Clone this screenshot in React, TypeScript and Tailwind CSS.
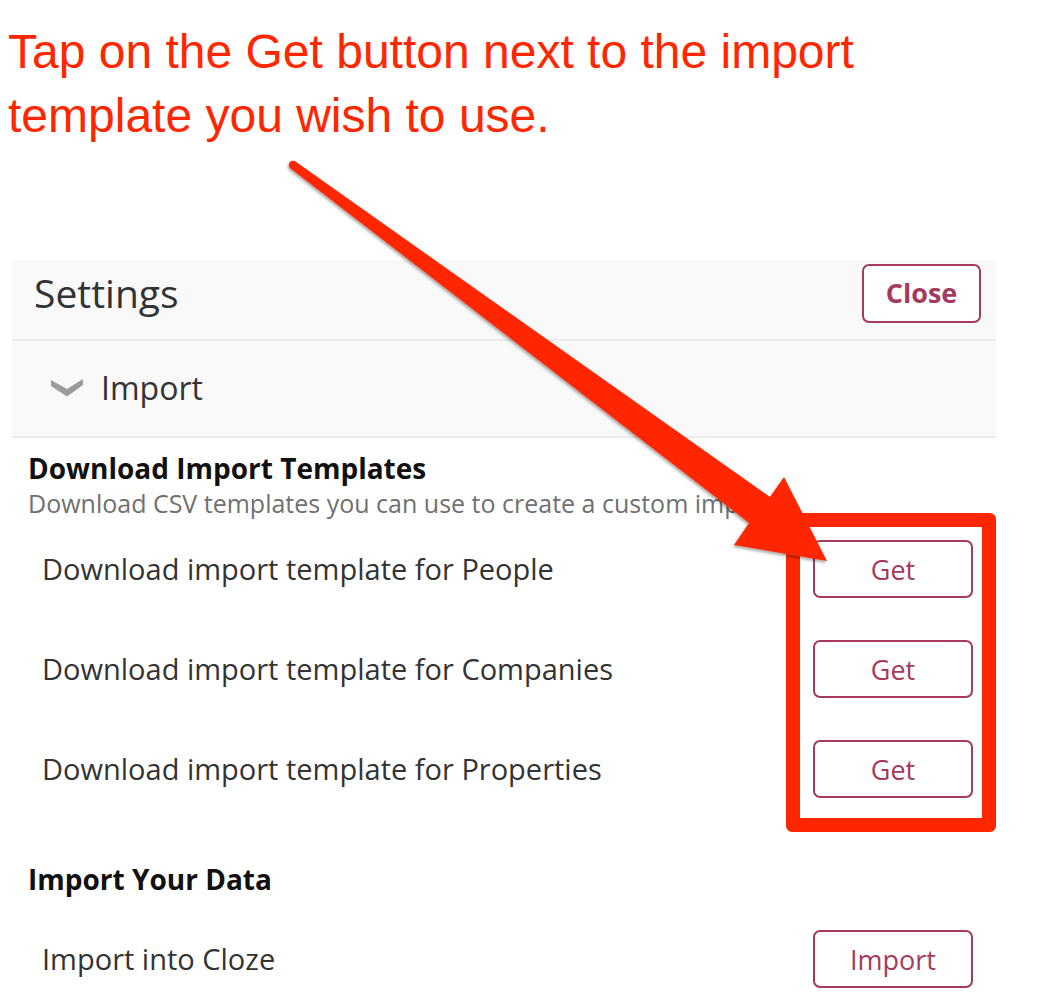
const rows = ["People", "Companies", "Properties"];

function OutlineButton({ label }: { label: string }) {
  return (
    <button className="h-[58px] w-[160px] rounded-[7px] border-2 border-[#a53a5c] bg-white text-[27px] leading-none text-[#a53a5c]">
      {label}
    </button>
  );
}

function Chevron() {
  return (
    <svg width="32" height="18" viewBox="0 0 32 18" className="shrink-0">
      <polygon points="0,1 16,10 32,0 32,6 16,17.5 0,7" fill="#9b9b9b" />
    </svg>
  );
}

export default function App() {
  return (
    <div className="relative h-[1000px] w-[1038px] overflow-hidden bg-white font-['Open_Sans',sans-serif]">
      <p className="pl-[8px] pt-[20px] font-['Liberation_Sans',Arial,sans-serif] text-[48px] leading-[64px] text-[#ff2600]">
        Tap on the Get button next to the import
        <br />
        template you wish to use.
      </p>

      <div className="ml-[12px] mt-[112px] w-[984px]">
        {/* header */}
        <div className="flex h-[81px] items-start justify-between border-b-2 border-[#ebebeb] bg-[#f9f9f9] pl-[22px] pr-[15px] pt-[4px]">
          <span className="flex h-[59px] items-center text-[39px] text-[#333]">Settings</span>
          <button className="h-[59px] w-[119px] rounded-[7px] border-2 border-[#a53a5c] bg-white text-[27px] font-bold text-[#a53a5c]">
            Close
          </button>
        </div>

        {/* accordion title */}
        <div className="flex h-[97px] items-center gap-[18px] border-b-2 border-[#ebebeb] bg-[#f9f9f9] pb-[2px] pl-[39px]">
          <Chevron />
          <span className="text-[32px] text-[#333]">Import</span>
        </div>

        {/* body */}
        <div className="pl-[16px] pr-[23px] pt-[11px]">
          <h3 className="h-[38px] text-[28px] font-bold leading-[38px] text-[#111]">Download Import Templates</h3>
          <p className="h-[32px] text-[25px] leading-[32px] text-[#707070]">
            Download CSV templates you can use to create a custom import.
          </p>
          {rows.map((r) => (
            <div key={r} className="flex h-[100px] items-center justify-between pl-[14px]">
              <span className="text-[29px] text-[#333]">Download import template for {r}</span>
              <OutlineButton label="Get" />
            </div>
          ))}

          <h3 className="mt-[40px] h-[40px] text-[28px] font-bold leading-[40px] text-[#111]">Import Your Data</h3>
          <div className="mt-[10px] flex h-[100px] items-center justify-between pl-[14px]">
            <span className="text-[29px] text-[#333]">Import into Cloze</span>
            <OutlineButton label="Import" />
          </div>
        </div>
      </div>

      {/* annotation: highlight box */}
      <div className="absolute left-[786px] top-[513px] h-[319px] w-[210px] rounded-[6px] border-[14px] border-[#ff2600]" />

      {/* annotation: arrow */}
      <svg className="pointer-events-none absolute left-0 top-0" width="1038" height="1000" viewBox="0 0 1038 1000">
        <defs>
          <filter id="shadow" x="-10%" y="-10%" width="120%" height="120%">
            <feDropShadow dx="-1" dy="2" stdDeviation="1.5" floodColor="#000" floodOpacity="0.35" />
          </filter>
        </defs>
        <g filter="url(#shadow)" fill="#ff2600">
          <circle cx="293" cy="165" r="4.2" />
          <polygon points="295.5,161.6 770,497 784,477 827,561 734,545 749,523 290.5,168.4" />
        </g>
      </svg>
    </div>
  );
}
